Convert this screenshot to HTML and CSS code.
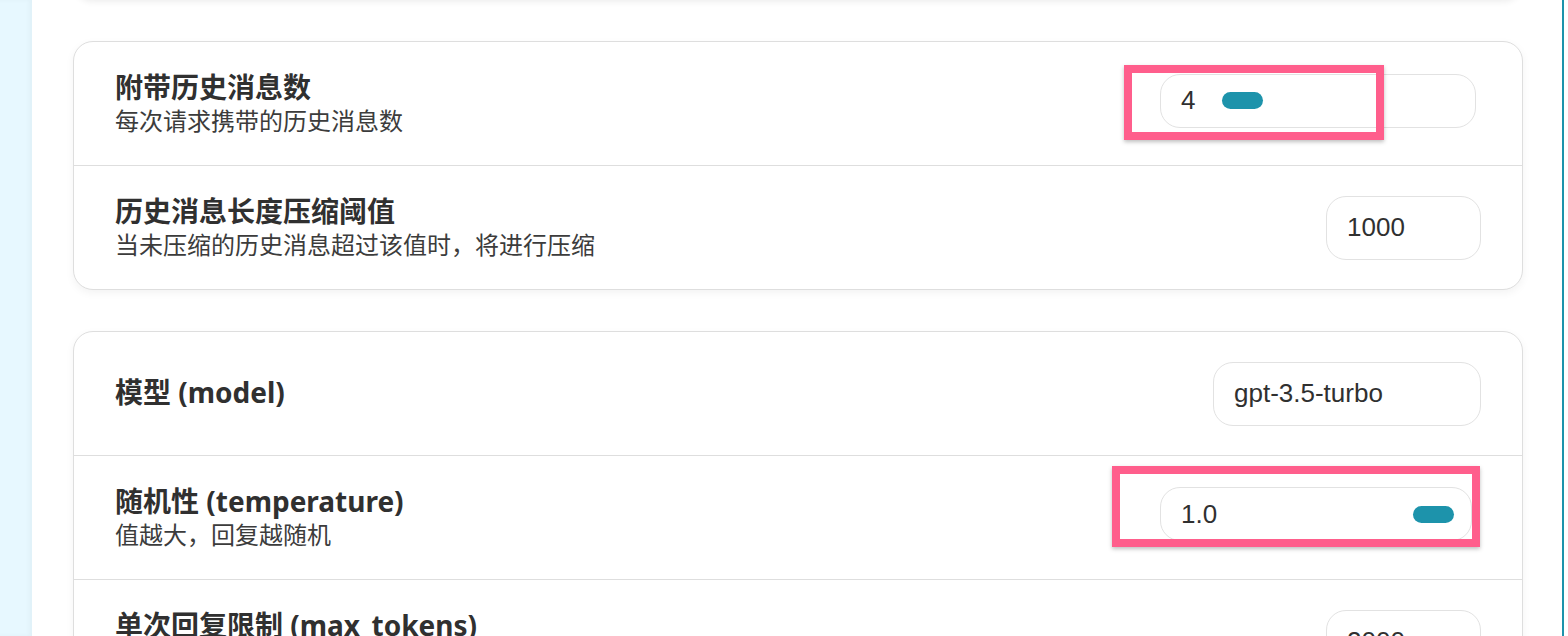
FILE: index.html
```html
<!DOCTYPE html>
<html lang="zh-CN">
<head>
    <meta charset="UTF-8">
    <meta name="viewport" content="width=device-width, initial-scale=1.0">
    <title>设置</title>
    <link rel="stylesheet" href="styles.css">
</head>
<body>

<div class="app">
    <aside class="sidebar"></aside>

    <main class="settings">
        <!-- bottom of the card above, scrolled out of view -->
        <div class="list list-prev"></div>

        <section class="list">
            <div class="list-item">
                <div class="item-title">
                    <div class="title">附带历史消息数</div>
                    <div class="sub">每次请求携带的历史消息数</div>
                </div>
                <div class="input-range">
                    <span class="range-value">4</span>
                    <input type="range" min="0" max="64" step="1" value="4">
                    <span class="mark mark-history"></span>
                </div>
            </div>
            <div class="list-item">
                <div class="item-title">
                    <div class="title">历史消息长度压缩阈值</div>
                    <div class="sub">当未压缩的历史消息超过该值时，将进行压缩</div>
                </div>
                <input class="input-text" type="text" value="1000">
            </div>
        </section>

        <section class="list">
            <div class="list-item">
                <div class="item-title">
                    <div class="title">模型 (model)</div>
                </div>
                <input class="input-text input-model" type="text" value="gpt-3.5-turbo">
            </div>
            <div class="list-item">
                <div class="item-title">
                    <div class="title">随机性 (temperature)</div>
                    <div class="sub">值越大，回复越随机</div>
                </div>
                <div class="input-range input-range-temp">
                    <span class="range-value">1.0</span>
                    <input type="range" min="0" max="1" step="0.1" value="1">
                    <span class="mark mark-temp"></span>
                </div>
            </div>
            <div class="list-item">
                <div class="item-title">
                    <div class="title">单次回复限制 (max_tokens)</div>
                    <div class="sub">单次交互所用的最大 Token 数</div>
                </div>
                <input class="input-text" type="text" value="2000">
            </div>
        </section>
    </main>
</div>

</body>
</html>
```

FILE: styles.css
```css
html, body {
    height: 100%;
}
body {
    margin: 0;
    padding: 0;
    overflow: hidden;
    background-color: #fff;
    color: #303030;
    font-family: "Noto Sans", "Noto Sans CJK SC", sans-serif;
}
.app {
    display: flex;
    height: 100%;
}
.sidebar {
    width: 32px;
    flex-shrink: 0;
    background-color: #e7f8ff;
    box-shadow: inset -3px 0 4px rgba(0, 0, 0, 0.03);
}
.settings {
    width: 1532px;
    box-sizing: border-box;
    padding: 0 39px 0 41px;
    border-right: 2px solid #1d93ab;
    background-color: #fff;
}
.list {
    border: 1px solid #dedede;
    border-radius: 20px;
    background-color: #fff;
    box-shadow: 0 3px 8px rgba(0, 0, 0, 0.05);
    margin-bottom: 41px;
}
.list-prev {
    height: 100px;
    box-sizing: border-box;
    margin-top: -100px;
    border-color: #f0f0f0;
    box-shadow: 0 2px 6px rgba(0, 0, 0, 0.07);
}
.list-item {
    display: flex;
    align-items: center;
    justify-content: space-between;
    min-height: 123px;
    padding: 0 41px;
    border-bottom: 1px solid #dedede;
}
.list-item:last-child {
    border-bottom: none;
}
.item-title {
    margin-bottom: 4px;
}
.title {
    font-size: 28px;
    font-weight: bold;
    line-height: 38px;
    color: #303030;
}
.sub {
    font-size: 24px;
    line-height: 30px;
    color: #3c3c3c;
}
.input-text {
    width: 155px;
    height: 64px;
    box-sizing: border-box;
    padding: 0 20px;
    border: 1px solid #e2e2e2;
    border-radius: 20px;
    outline: none;
    font-family: "Liberation Sans", Arial, sans-serif;
    font-size: 26px;
    color: #303030;
    background-color: #fff;
}
.input-model {
    width: 268px;
}
.input-range {
    position: relative;
    display: flex;
    align-items: center;
    width: 316px;
    height: 54px;
    box-sizing: border-box;
    padding: 0 17px 0 20px;
    margin: 0 5px 6px 0;
    border: 1px solid #e2e2e2;
    border-radius: 20px;
    font-family: "Liberation Sans", Arial, sans-serif;
    font-size: 26px;
    color: #303030;
}
.input-range-temp {
    width: 312px;
    margin-right: 9px;
    margin-bottom: 7px;
}
.input-range input[type="range"] {
    -webkit-appearance: none;
    appearance: none;
    flex: 1;
    min-width: 0;
    height: 17px;
    margin: 0 0 0 13px;
    padding: 0;
    background: transparent;
}
.input-range input[type="range"]::-webkit-slider-runnable-track {
    height: 17px;
    background: transparent;
    border: none;
}
.input-range input[type="range"]::-webkit-slider-thumb {
    -webkit-appearance: none;
    appearance: none;
    width: 41px;
    height: 17px;
    border: none;
    border-radius: 9px;
    background-color: #1d93ab;
}
/* pink annotation boxes drawn over the sliders */
.mark {
    position: absolute;
    z-index: 2;
    box-sizing: border-box;
    border: 8px solid #ff5e8c;
    box-shadow: 0 2px 4px rgba(0, 0, 0, 0.25);
    pointer-events: none;
}
.mark-history {
    left: -37px;
    top: -10px;
    width: 260px;
    height: 75px;
}
.mark-temp {
    left: -49px;
    top: -22px;
    width: 368px;
    height: 81px;
}
```
